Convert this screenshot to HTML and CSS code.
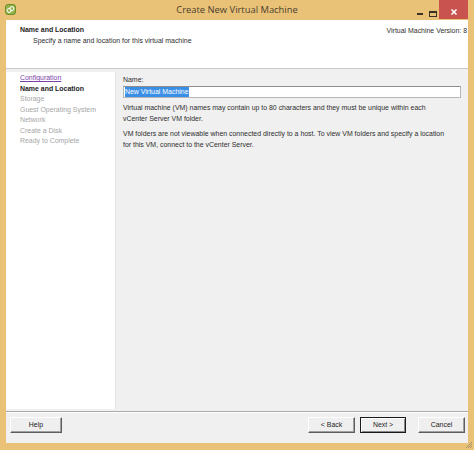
FILE: index.html
```
<!DOCTYPE html>
<html>
<head>
<meta charset="utf-8">
<link rel="stylesheet" href="styles.css">
</head>
<body>
<div class="window">
  <div class="titlebar">
    <div class="app-icon">
      <svg width="11" height="11" viewBox="0 0 11 11">
        <rect x="0.5" y="0.5" width="10" height="10" rx="2.5" fill="#93b34a" stroke="#6f8f2c"/>
        <rect x="2.3" y="4.6" width="3.6" height="3.6" rx="1.2" fill="none" stroke="#f4f7e6" stroke-width="1.1" transform="rotate(-45 4.1 6.4)"/>
        <rect x="5.1" y="2.8" width="3.6" height="3.6" rx="1.2" fill="none" stroke="#f4f7e6" stroke-width="1.1" transform="rotate(-45 6.9 4.6)"/>
      </svg>
    </div>
    <div class="title">Create New Virtual Machine</div>
    <div class="controls">
      <div class="ctl-min"></div>
      <div class="ctl-max"></div>
      <div class="ctl-close">
        <svg width="8" height="8" viewBox="0 0 8 8"><path d="M1.5 1.5 L6.5 6.5 M6.5 1.5 L1.5 6.5" stroke="#fff" stroke-width="1.6"/></svg>
      </div>
    </div>
  </div>
  <div class="frame">
    <div class="header">
      <div class="header-text">
        <div class="h-title">Name and Location</div>
        <div class="h-sub">Specify a name and location for this virtual machine</div>
      </div>
      <div class="h-version">Virtual Machine Version: 8</div>
    </div>
    <div class="body">
      <div class="steps">
        <div class="step link">Configuration</div>
        <div class="step current">Name and Location</div>
        <div class="step">Storage</div>
        <div class="step">Guest Operating System</div>
        <div class="step">Network</div>
        <div class="step">Create a Disk</div>
        <div class="step">Ready to Complete</div>
      </div>
      <div class="content">
        <div class="label">Name:</div>
        <div class="input"><span class="sel">New Virtual Machine</span></div>
        <p class="para">Virtual machine (VM) names may contain up to 80 characters and they must be unique within each<br>vCenter Server VM folder.</p>
        <p class="para">VM folders are not viewable when connected directly to a host. To view VM folders and specify a location<br>for this VM, connect to the vCenter Server.</p>
      </div>
    </div>
    <div class="footer">
      <div class="btn btn-help">Help</div>
      <div class="spacer"></div>
      <div class="btn btn-back">&lt; Back</div>
      <div class="btn btn-next">Next &gt;</div>
      <div class="btn btn-cancel">Cancel</div>
    </div>
  </div>
  <div class="bottom-edge">
    <svg class="grip" width="8" height="8" viewBox="0 0 8 8"><path d="M7 1 L1 7 M7 3 L3 7 M7 5 L5 7" stroke="#9a8a6a" stroke-width="0.8"/></svg>
  </div>
</div>
</body>
</html>
```

FILE: styles.css
```
* { box-sizing: border-box; }
html, body { margin: 0; padding: 0; }
body {
  width: 474px;
  height: 450px;
  overflow: hidden;
  background: #e9c277;
  font-family: "Liberation Sans", Arial, sans-serif;
  font-size: 6.95px;
  color: #2e2e2e;
}
.window {
  width: 474px;
  height: 450px;
  display: flex;
  flex-direction: column;
  background: #e9c277;
}
.titlebar {
  height: 20px;
  display: flex;
  align-items: center;
  position: relative;
  flex-shrink: 0;
}
.app-icon {
  width: 11px;
  height: 11px;
  margin-left: 5px;
  margin-top: -1px;
  display: flex;
}
.title {
  position: absolute;
  left: 0;
  right: 0;
  top: 3px;
  text-align: center;
  font-family: "Open Sans", "Noto Sans", sans-serif;
  font-size: 9.4px;
  color: #4a4030;
  pointer-events: none;
}
.controls {
  margin-left: auto;
  margin-right: 6px;
  display: flex;
  align-items: stretch;
  height: 20px;
  align-self: flex-start;
}
.ctl-min {
  width: 6px;
  height: 2px;
  background: #3a3325;
  margin-top: 13px;
  margin-right: 6px;
}
.ctl-max {
  width: 8px;
  height: 6px;
  border: 1px solid #3a3325;
  border-top-width: 2px;
  margin-top: 11px;
  margin-right: 2px;
}
.ctl-close {
  width: 29px;
  height: 19px;
  background: #c9534f;
  display: flex;
  align-items: center;
  justify-content: center;
  padding-top: 4px;
}
.frame {
  flex: 1;
  margin: 0 6px 0 6px;
  display: flex;
  flex-direction: column;
}
.header {
  height: 49px;
  background: #ffffff;
  border-bottom: 1px solid #c9c9c9;
  display: flex;
  justify-content: space-between;
  padding: 4px 1px 0 14px;
  flex-shrink: 0;
}
.h-title {
  font-weight: bold;
  line-height: 11px;
  color: #1e1e1e;
}
.h-sub {
  line-height: 11px;
  padding-left: 13px;
}
.h-version {
  line-height: 11px;
  padding-top: 1px;
}
.body {
  flex: 1;
  background: #f0f0f0;
  display: flex;
  padding: 3px 0 2px 0;
  border-bottom: 1px solid #a9a9a9;
}
.steps {
  width: 110px;
  background: #ffffff;
  padding: 1px 0 0 14px;
  border-right: 1px solid #e4e4e4;
}
.step {
  line-height: 10.5px;
  color: #a6a6a6;
  white-space: nowrap;
}
.step.link {
  color: #7b3fa8;
  text-decoration: underline;
}
.step.current {
  color: #1e1e1e;
  font-weight: bold;
}
.content {
  flex: 1;
  padding: 3px 7px 0 7px;
}
.label {
  line-height: 10px;
}
.input {
  height: 12px;
  margin-top: 1px;
  background: #ffffff;
  border: 1px solid #b7b7b7;
  border-top-color: #8d8d8d;
  padding: 0 0 0 1px;
  line-height: 10px;
}
.sel {
  background: #3a8ee6;
  color: #ffffff;
  display: inline-block;
  line-height: 10px;
}
.para {
  margin: 4px 0 3px 0;
  line-height: 11px;
  white-space: nowrap;
}
.footer {
  height: 31px;
  display: flex;
  align-items: flex-start;
  padding: 4px 3px 0 4px;
  border-top: 1px solid #ffffff;
  background: #f0f0f0;
  flex-shrink: 0;
}
.spacer { flex: 1; }
.btn {
  height: 16px;
  background: #efefef;
  border: 1px solid;
  border-color: #ffffff #5e5e5e #5e5e5e #ffffff;
  box-shadow: inset -1px -1px 0 #a0a0a0;
  text-align: center;
  line-height: 14px;
  color: #222;
}
.btn-help { width: 52px; }
.btn-back { width: 47px; }
.btn-next {
  width: 46px;
  margin-left: 5px;
  border: 1px solid #1a1a1a;
  box-shadow: inset 1px 1px 0 #ffffff, inset -1px -1px 0 #8a8a8a;
}
.btn-cancel { width: 47px; margin-left: 12px; }
.bottom-edge {
  height: 7px;
  flex-shrink: 0;
  position: relative;
}
.grip {
  position: absolute;
  right: 1px;
  top: -2px;
}
```
